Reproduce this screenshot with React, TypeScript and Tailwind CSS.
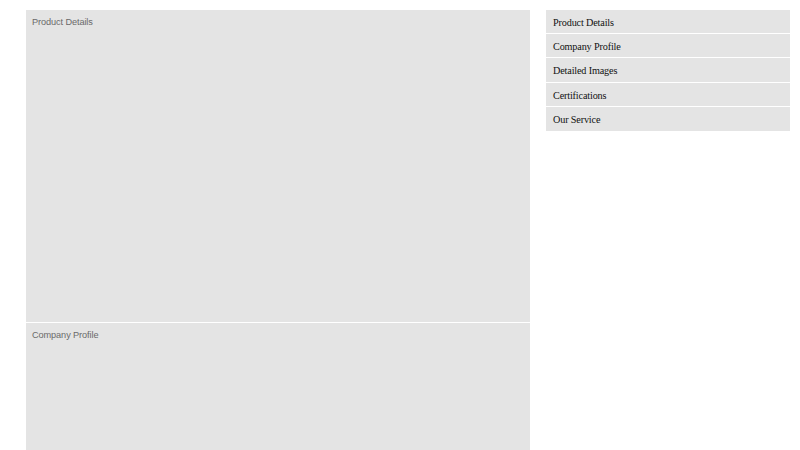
import React from "react";

const tabs = ["Product Details", "Company Profile", "Detailed Images", "Certifications", "Our Service"];

export default function App() {
  return (
    <div className="flex h-[450px] w-[800px] gap-[16px] overflow-hidden bg-white pl-[26px] pr-[10px] pt-[10px]">
      {/* content sections */}
      <div className="flex w-[504px] shrink-0 flex-col font-['Liberation_Sans',Arial,sans-serif] text-[9.2px] leading-[14px] text-[#6a6a6a]">
        <div className="h-[313px] border-b border-white bg-[#e4e4e4] px-[6px] pt-[5px] tracking-[-0.1px]">Product Details</div>
        <div className="flex-1 bg-[#e4e4e4] px-[6px] pt-[5px] tracking-[-0.1px]">Company Profile</div>
      </div>

      {/* side nav */}
      <div className="flex w-[244px] flex-col self-start">
        {tabs.map((t, i) => (
          <div
            key={t}
            className={
              "flex h-[24.2px] items-center bg-[#e4e4e4] px-[7px] pt-[2px] font-['Liberation_Serif','Times_New_Roman',serif] text-[10.2px] tracking-[-0.15px] text-[#111] " +
              (i < tabs.length - 1 ? "border-b border-white" : "")
            }
          >
            {t}
          </div>
        ))}
      </div>
    </div>
  );
}
